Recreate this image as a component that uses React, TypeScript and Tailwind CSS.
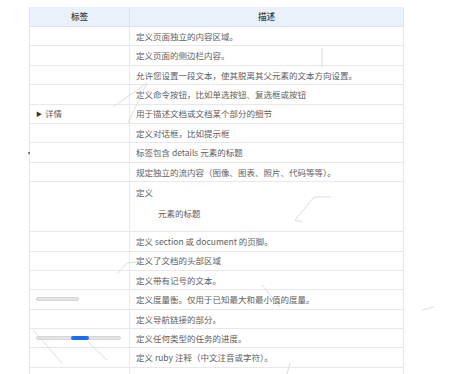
import React from 'react';

type Row = { tag?: React.ReactNode; desc: React.ReactNode; tall?: boolean };

const Meter = () => (
    <div className="h-[4px] w-[43px] rounded-full bg-[#e4e4e4] border border-[#d6d6d6]" />
);

const Progress = () => (
    <div className="relative h-[4px] w-[85px] rounded-full bg-[#e4e4e4] border border-[#d6d6d6]">
        <div className="absolute left-[34px] top-[-1px] h-[4px] w-[18px] rounded-full bg-[#1a6ff0]" />
    </div>
);

const rows: Row[] = [
    { desc: '定义页面独立的内容区域。' },
    { desc: '定义页面的侧边栏内容。' },
    { desc: '允许您设置一段文本，使其脱离其父元素的文本方向设置。' },
    { desc: '定义命令按钮，比如单选按钮、复选框或按钮' },
    {
        tag: (
            <span className="flex items-center gap-[3px]">
                <span className="text-[6px] text-[#333]">▶</span>
                <span>详情</span>
            </span>
        ),
        desc: '用于描述文档或文档某个部分的细节',
    },
    { desc: '定义对话框，比如提示框' },
    { desc: '标签包含 details 元素的标题' },
    { desc: '规定独立的流内容（图像、图表、照片、代码等等）。' },
    {
        tall: true,
        desc: (
            <div className="flex flex-col">
                <span>定义</span>
                <span className="mt-[8px] ml-[22px]">元素的标题</span>
            </div>
        ),
    },
    { desc: '定义 section 或 document 的页脚。' },
    { desc: '定义了文档的头部区域' },
    { desc: '定义带有记号的文本。' },
    { tag: <Meter />, desc: '定义度量衡。仅用于已知最大和最小值的度量。' },
    { desc: '定义导航链接的部分。' },
    { tag: <Progress />, desc: '定义任何类型的任务的进度。' },
    { desc: '定义 ruby 注释（中文注音或字符）。' },
    { desc: '' },
];

const App = () => {
    return (
        <div
            className="relative w-[474px] h-[374px] overflow-hidden bg-white pt-[7px] pl-[29px]"
            style={{ fontFamily: '"Noto Sans CJK SC", "Noto Sans", sans-serif' }}
        >
            <div className="w-[375px] border-x border-[#e6e6e6] text-[8.5px] text-[#606060]">
                {/* header */}
                <div className="flex h-[20px] bg-[#e9f1fa] border-b border-[#dde4ec] text-[#3c3c3c] font-medium text-[8.6px]">
                    <div className="w-[100px] flex items-center justify-center border-r border-[#dde4ec]">标签</div>
                    <div className="flex-1 flex items-center justify-center">描述</div>
                </div>
                {rows.map((r, i) => (
                    <div
                        key={i}
                        className={
                            'flex border-b border-[#e8e8e8] ' + (r.tall ? 'h-[50px]' : 'h-[19.4px]')
                        }
                    >
                        <div className="w-[100px] shrink-0 flex items-center pl-[6px] border-r border-[#e8e8e8]">
                            {r.tag}
                        </div>
                        <div className={'flex-1 flex pl-[6px] ' + (r.tall ? 'items-start pt-[4px]' : 'items-center')}>
                            {r.desc}
                        </div>
                    </div>
                ))}
            </div>

            {/* stray dot left of summary row */}
            <div className="absolute left-[28px] top-[152px] h-[2px] w-[2px] rounded-full bg-[#555]" />

            {/* faint scribbles over the picture */}
            <svg className="absolute inset-0 pointer-events-none" width="474" height="374">
                <g stroke="#d4d4d4" strokeWidth="0.8" fill="none">
                    <polyline points="113,107 147,83 128,123" />
                    <line x1="322" y1="48" x2="322" y2="67" />
                    <polyline points="331,197 314,197 295,220 302,222" />
                    <polyline points="118,273 127,263 137,262" />
                    <line x1="33" y1="330" x2="62" y2="363" />
                    <line x1="88" y1="342" x2="107" y2="360" />
                    <line x1="262" y1="285" x2="280" y2="307" />
                    <line x1="422" y1="310" x2="434" y2="307" />
                    <line x1="290" y1="363" x2="287" y2="374" />
                </g>
            </svg>
        </div>
    );
};

export default App;
